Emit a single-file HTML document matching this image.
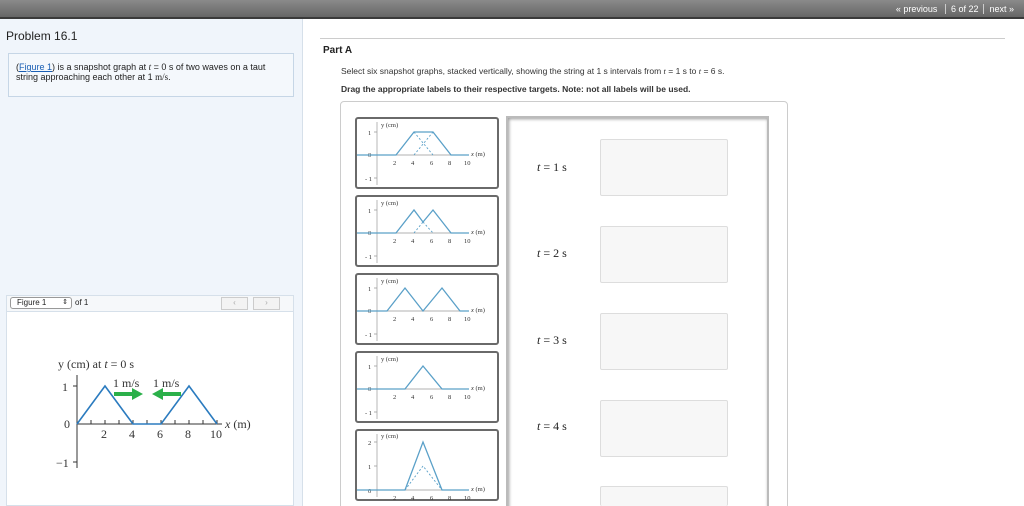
<!DOCTYPE html>
<html style="width:1024px;height:506px;overflow:hidden"><head><meta charset="utf-8"><style>
*{margin:0;padding:0;box-sizing:border-box}
body{width:1024px;height:506px;overflow:hidden;background:#fff;font-family:"Liberation Sans",sans-serif;position:relative;color:#222}
.abs{position:absolute}
.top{left:0;top:0;width:1024px;height:19px;background:linear-gradient(#8a8a8a,#666);border-bottom:2px solid #3a3a3a}
.nav{right:10px;top:4px;font-size:9px;color:#fff;white-space:nowrap}
.nav span{border-left:1px solid #ccc;margin-left:5px;padding-left:5px}
.left{left:0;top:19px;width:303px;height:487px;background:#f0f5fb;border-right:1px solid #d6e0ea}
.card{left:355px;width:144px;height:72px;border:2px solid #6a6a6a;border-radius:3px;background:#fff}
.card svg{position:absolute;left:0;top:0}
.tgt{left:600px;width:128px;height:57px;background:#f7f7f7;border:1px solid #ddd;border-radius:2px}
.lbl{left:537px;font-family:"Liberation Serif",serif;font-size:12px}
.lbl i{font-style:italic}
</style></head><body>
<div class="abs top"></div>
<div class="abs nav">« previous <span>6 of 22</span><span>next »</span></div>
<div class="abs left"></div>
<div class="abs" style="left:6px;top:29px;font-size:12px">Problem 16.1</div>
<div class="abs" style="left:8px;top:53px;width:286px;height:44px;border:1px solid #c6d6e6;background:#f4f8fc;font-size:9px;padding:8px 7px;line-height:10px">(<span style="color:#1a5fb4;text-decoration:underline">Figure 1</span>) is a snapshot graph at <i style="font-family:'Liberation Serif',serif">t</i> = 0 s of two waves on a taut string approaching each other at 1 <span style="font-family:'Liberation Serif',serif">m/s</span>.</div>
<div class="abs" style="left:6px;top:295px;width:288px;height:17px;background:#f6f8fa;border:1px solid #d6e0ea"></div>
<div class="abs" style="left:10px;top:297px;width:62px;height:12px;border:1px solid #999;border-radius:3px;background:#fff;font-size:8px;padding-left:6px;line-height:10px">Figure 1<span style="position:absolute;right:3px;font-size:7px">⇕</span></div>
<div class="abs" style="left:75px;top:298px;font-size:8px">of 1</div>
<div class="abs" style="left:221px;top:297px;width:27px;height:13px;border:1px solid #ccc;background:#f3f3f3;font-size:8px;color:#aaa;text-align:center">‹</div>
<div class="abs" style="left:253px;top:297px;width:27px;height:13px;border:1px solid #ccc;background:#f3f3f3;font-size:8px;color:#aaa;text-align:center">›</div>
<div class="abs" style="left:6px;top:312px;width:288px;height:194px;background:#fff;border:1px solid #d6e0ea;border-top:none"></div>
<svg class="abs" style="left:0;top:0" width="303" height="506">
<g font-family="Liberation Serif,serif" font-size="12" fill="#333">
<text x="58" y="368">y (cm) at <tspan font-style="italic">t</tspan> = 0 s</text>
<text x="62" y="391">1</text><text x="64" y="428">0</text><text x="56" y="467">−1</text>
<text x="101" y="438">2</text><text x="129" y="438">4</text><text x="157" y="438">6</text><text x="185" y="438">8</text><text x="210" y="438">10</text>
<text x="225" y="428"><tspan font-style="italic">x</tspan> (m)</text>
<text x="113" y="387">1 m/s</text><text x="153" y="387">1 m/s</text>
</g>
<path d="M77 375V468M73 386H77M73 462H77M77 424H222" stroke="#333" fill="none"/>
<path d="M91 424v-4M105 424v-4M119 424v-4M133 424v-4M147 424v-4M161 424v-4M175 424v-4M189 424v-4M203 424v-4M217 424v-4" stroke="#333"/>
<path d="M77 424L105 386L133 424H161L189 386L217 424" stroke="#2b7bbf" stroke-width="1.6" fill="none"/>
<path d="M114 392h18v-4l11 6-11 6v-4h-18z" fill="#2bb04a"/>
<path d="M181 392h-18v-4l-11 6 11 6v-4h18z" fill="#2bb04a"/>
</svg>
<div class="abs" style="left:320px;top:38px;width:685px;border-top:1px solid #ccc"></div>
<div class="abs" style="left:323px;top:45px;font-size:10px;font-weight:bold">Part A</div>
<div class="abs" style="left:341px;top:66px;font-size:8.5px;color:#333">Select six snapshot graphs, stacked vertically, showing the string at 1 s intervals from <i style="font-family:'Liberation Serif',serif">t</i> = 1 s to <i style="font-family:'Liberation Serif',serif">t</i> = 6 s.</div>
<div class="abs" style="left:341px;top:84px;font-size:8.5px;font-weight:bold;color:#333">Drag the appropriate labels to their respective targets. Note: not all labels will be used.</div>
<div class="abs" style="left:340px;top:101px;width:448px;height:420px;border:1px solid #ccc;border-radius:4px"></div>
<div class="abs" style="left:506px;top:116px;width:263px;height:400px;border:2px solid #bbb;box-shadow:inset 1px 1px 3px #999"></div>

<div class="abs card" style="top:117px"><svg width="144" height="72" font-family="Liberation Serif,serif" font-size="6.5" fill="#333">
<path d="M20 3V66M17 13H20M17 59H20M0 36H112" stroke="#999" stroke-width=".7" fill="none"/>
<text x="11" y="16">1</text><text x="11" y="38">0</text><text x="8" y="62">- 1</text><text x="24" y="8">y (cm)</text>
<text x="36" y="46">2</text><text x="54" y="46">4</text><text x="73" y="46">6</text><text x="91" y="46">8</text><text x="107" y="46">10</text><text x="114" y="37"><tspan font-style="italic">x</tspan> (m)</text>
<path d="M0 36H39L57 13H76L94 36H112" stroke="#5aa0c8" stroke-width="1.3" fill="none"/>
<path d="M57 36L76 13M57 13L76 36" stroke="#5aa0c8" stroke-width=".9" stroke-dasharray="2 2" fill="none"/></svg></div>

<div class="abs card" style="top:195px"><svg width="144" height="72" font-family="Liberation Serif,serif" font-size="6.5" fill="#333">
<path d="M20 3V66M17 13H20M17 59H20M0 36H112" stroke="#999" stroke-width=".7" fill="none"/>
<text x="11" y="16">1</text><text x="11" y="38">0</text><text x="8" y="62">- 1</text><text x="24" y="8">y (cm)</text>
<text x="36" y="46">2</text><text x="54" y="46">4</text><text x="73" y="46">6</text><text x="91" y="46">8</text><text x="107" y="46">10</text><text x="114" y="37"><tspan font-style="italic">x</tspan> (m)</text>
<path d="M0 36H39L57 13L66 25L76 13L94 36H112" stroke="#5aa0c8" stroke-width="1.3" fill="none"/>
<path d="M57 36L66 25M66 25L76 36" stroke="#5aa0c8" stroke-width=".9" stroke-dasharray="2 2" fill="none"/></svg></div>

<div class="abs card" style="top:273px"><svg width="144" height="72" font-family="Liberation Serif,serif" font-size="6.5" fill="#333">
<path d="M20 3V66M17 13H20M17 59H20M0 36H112" stroke="#999" stroke-width=".7" fill="none"/>
<text x="11" y="16">1</text><text x="11" y="38">0</text><text x="8" y="62">- 1</text><text x="24" y="8">y (cm)</text>
<text x="36" y="46">2</text><text x="54" y="46">4</text><text x="73" y="46">6</text><text x="91" y="46">8</text><text x="107" y="46">10</text><text x="114" y="37"><tspan font-style="italic">x</tspan> (m)</text>
<path d="M0 36H30L48 13L66 36L85 13L103 36H112" stroke="#5aa0c8" stroke-width="1.3" fill="none"/></svg></div>

<div class="abs card" style="top:351px"><svg width="144" height="72" font-family="Liberation Serif,serif" font-size="6.5" fill="#333">
<path d="M20 3V66M17 13H20M17 59H20M0 36H112" stroke="#999" stroke-width=".7" fill="none"/>
<text x="11" y="16">1</text><text x="11" y="38">0</text><text x="8" y="62">- 1</text><text x="24" y="8">y (cm)</text>
<text x="36" y="46">2</text><text x="54" y="46">4</text><text x="73" y="46">6</text><text x="91" y="46">8</text><text x="107" y="46">10</text><text x="114" y="37"><tspan font-style="italic">x</tspan> (m)</text>
<path d="M0 36H48L66 13L85 36H112" stroke="#5aa0c8" stroke-width="1.3" fill="none"/></svg></div>

<div class="abs card" style="top:429px"><svg width="144" height="72" font-family="Liberation Serif,serif" font-size="6.5" fill="#333">
<path d="M20 3V66M17 11H20M17 35H20M0 59H112" stroke="#999" stroke-width=".7" fill="none"/>
<text x="11" y="14">2</text><text x="11" y="38">1</text><text x="11" y="62">0</text><text x="24" y="7">y (cm)</text>
<text x="36" y="69">2</text><text x="54" y="69">4</text><text x="73" y="69">6</text><text x="91" y="69">8</text><text x="107" y="69">10</text><text x="114" y="60"><tspan font-style="italic">x</tspan> (m)</text>
<path d="M0 59H48L66 11L85 59H112" stroke="#5aa0c8" stroke-width="1.3" fill="none"/>
<path d="M48 59L66 35L85 59" stroke="#5aa0c8" stroke-width=".9" stroke-dasharray="2 2" fill="none"/></svg></div>

<div class="abs lbl" style="top:160px"><i>t</i> = 1 s</div>
<div class="abs lbl" style="top:246px"><i>t</i> = 2 s</div>
<div class="abs lbl" style="top:333px"><i>t</i> = 3 s</div>
<div class="abs lbl" style="top:419px"><i>t</i> = 4 s</div>
<div class="abs lbl" style="top:503px"><i>t</i> = 5 s</div>
<div class="abs tgt" style="top:139px"></div>
<div class="abs tgt" style="top:226px"></div>
<div class="abs tgt" style="top:313px"></div>
<div class="abs tgt" style="top:400px"></div>
<div class="abs tgt" style="top:486px;height:20px;border-bottom:none"></div>
</body></html>
